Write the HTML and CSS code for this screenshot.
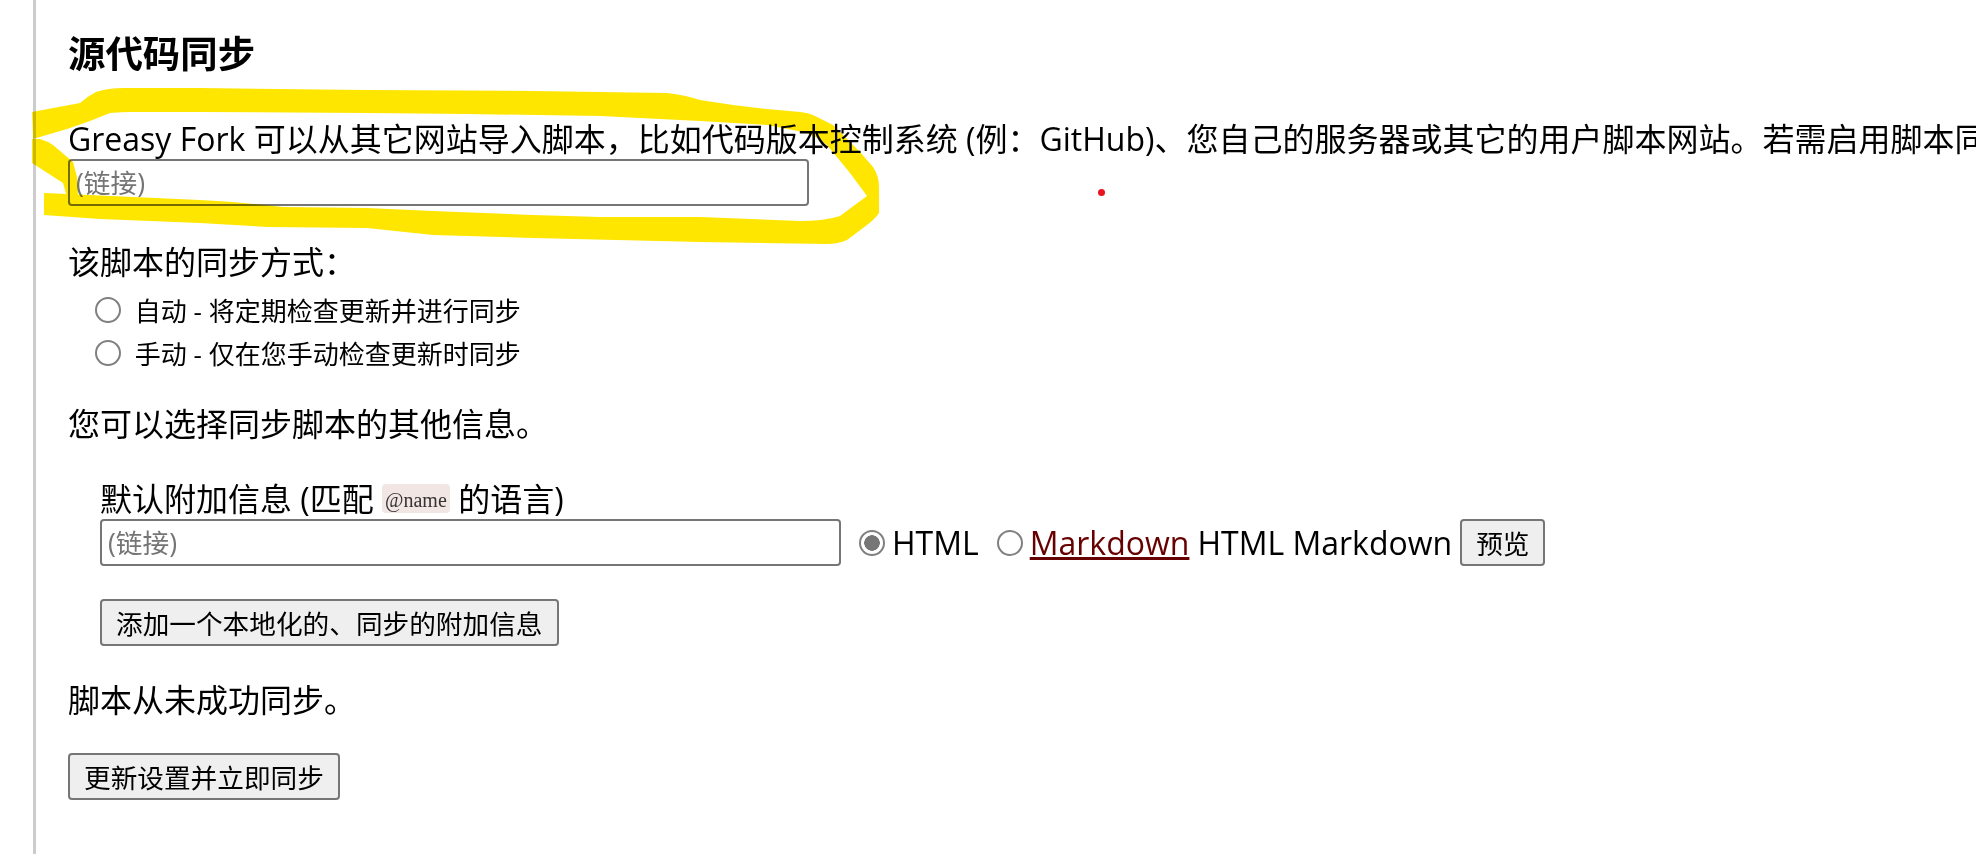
FILE: index.html
```html
<!DOCTYPE html>
<html lang="zh-CN">
<head>
<meta charset="UTF-8">
<title>源代码同步</title>
<link rel="stylesheet" href="styles.css">
</head>
<body>

<div class="content">
    <h3 class="section-title">源代码同步</h3>

    <p class="intro">Greasy Fork 可以从其它网站导入脚本，比如代码版本控制系统 (例：GitHub)、您自己的服务器或其它的用户脚本网站。若需启用脚本同步</p>
    <input class="url-input" type="text" placeholder="(链接)">

    <p class="sync-heading">该脚本的同步方式：</p>
    <div class="sync-options">
        <label class="sync-option"><input type="radio" name="sync"> 自动 - 将定期检查更新并进行同步</label>
        <label class="sync-option"><input type="radio" name="sync"> 手动 - 仅在您手动检查更新时同步</label>
    </div>

    <p class="extra-note">您可以选择同步脚本的其他信息。</p>

    <div class="additional-info">
        <div class="additional-label">默认附加信息 (匹配 <code>@name</code> 的语言)</div>
        <div class="additional-row">
            <input class="url-input" type="text" placeholder="(链接)">
            <label class="markup-choice"><input type="radio" name="markup" checked>HTML</label>
            <label class="markup-choice"><input type="radio" name="markup"><a href="#">Markdown</a></label>
            <span class="markup-text">HTML Markdown</span>
            <button class="btn" type="button">预览</button>
        </div>
        <button class="btn add-btn" type="button">添加一个本地化的、同步的附加信息</button>
    </div>

    <p class="sync-status">脚本从未成功同步。</p>
    <button class="btn submit-btn" type="button">更新设置并立即同步</button>
</div>

<!-- highlighter marks drawn over the screenshot -->
<svg class="annotation" width="1976" height="854" viewBox="0 0 1976 854">
    <path class="marker" d="M32 112 L80 103 Q88 96 96 92 Q108 88 124 88 L200 88 L367 90 L533 91 L667 93 Q685 95 700 100 L733 105 L767 109 L800 112 Q810 113 817 117 L833 125 L860 152 L873 167 Q879 176 879 187 L879 213 Q875 219 867 225 L847 240 Q838 244 827 244 L700 242 L533 238 L433 235 L367 228 L267 227 L200 223 L100 219 L44 215 L44 193 L67 194 L200 200 L233 202 L283 207 L367 208 L433 211 L533 215 L600 217 L700 217 L800 221 Q825 221 840 216 L867 196 L850 173 L827 145 Q815 135 803 132 L767 125 L700 121 L600 116 L467 114 L367 113 L200 112 L133 112 Q120 112 110 113 L90 121 L67 129 L33 139 Z"/>
    <path class="marker" d="M32 139 L40 139 Q47 141 53 145 L73 162 L77 177 L78 197 L67 197 L63 183 L32 163 Z"/>
    <circle class="dot" cx="1101.5" cy="192.5" r="3.5"/>
</svg>

</body>
</html>
```

FILE: styles.css
```css
html, body {
    margin: 0;
    height: 100%;
    overflow: hidden;
    background-color: #ffffff;
}

body {
    font-family: "Open Sans", "Noto Sans CJK SC", sans-serif;
    font-size: 32px;
    color: #000;
}

/* Page column */
.content {
    height: 100%;
    margin-left: 33px;
    padding-left: 32px;
    padding-top: 32px;
    border-left: 3px solid #ccc;
    box-sizing: border-box;
}

.section-title {
    margin: 0;
    font-size: 37.44px;
    line-height: 44px;
    font-weight: 700;
}

.intro {
    margin: 43px 0 0;
    line-height: 40px;
    white-space: nowrap;
}

/* Form controls */
.url-input {
    display: block;
    width: 741px;
    height: 47px;
    box-sizing: border-box;
    padding: 0 6px;
    border: 2px solid #767676;
    border-radius: 4px;
    background-color: #fff;
    font-family: inherit;
    font-size: 26.67px;
}

.url-input::placeholder {
    color: #757575;
}

input[type="radio"] {
    appearance: none;
    flex: none;
    width: 26px;
    height: 26px;
    margin: 0;
    border: 2px solid #808080;
    border-radius: 50%;
    background-color: #fff;
}

input[type="radio"]:checked {
    background-image: radial-gradient(circle, #767676 0 7.5px, #fff 8px);
}

.btn {
    display: block;
    height: 47px;
    box-sizing: border-box;
    padding: 0 14px;
    border: 2px solid #767676;
    border-radius: 4px;
    background-color: #efefef;
    color: #000;
    font-family: inherit;
    font-size: 26.67px;
}

/* Sync method */
.sync-heading {
    margin: 35px 0 0;
    line-height: 42px;
}

.sync-options {
    margin-top: 5px;
    padding-left: 27px;
}

.sync-option {
    display: flex;
    align-items: center;
    gap: 7px;
    height: 43px;
    font-size: 26px;
    white-space: pre;
}

.extra-note {
    margin: 29px 0 0;
    line-height: 42px;
}

/* Additional info */
.additional-info {
    margin-top: 33px;
    padding-left: 32px;
}

.additional-label {
    height: 41px;
    line-height: 41px;
}

code {
    display: inline-block;
    padding: 0 3px;
    height: 29px;
    line-height: 33px;
    border-radius: 4px;
    background-color: #f2e6e4;
    color: #333;
    font-family: "Liberation Serif", serif;
    font-size: 20px;
    vertical-align: 4px;
}

.additional-row {
    display: flex;
    align-items: center;
    white-space: nowrap;
}

.markup-choice {
    display: flex;
    align-items: center;
    gap: 7px;
    margin-left: 18px;
}

.markup-choice + .markup-choice {
    margin-left: 18px;
}

.markup-choice a {
    color: #670000;
}

.markup-text {
    margin-left: 8px;
}

.additional-row .btn {
    margin-left: 8px;
}

.add-btn {
    margin-top: 33px;
}

.sync-status {
    margin: 33px 0 0;
    line-height: 42px;
}

.submit-btn {
    margin-top: 32px;
}

/* Annotation overlay */
.annotation {
    position: absolute;
    top: 0;
    left: 0;
    pointer-events: none;
    mix-blend-mode: multiply;
}

.marker {
    fill: #ffe600;
}

.dot {
    fill: #e8141f;
}
```
